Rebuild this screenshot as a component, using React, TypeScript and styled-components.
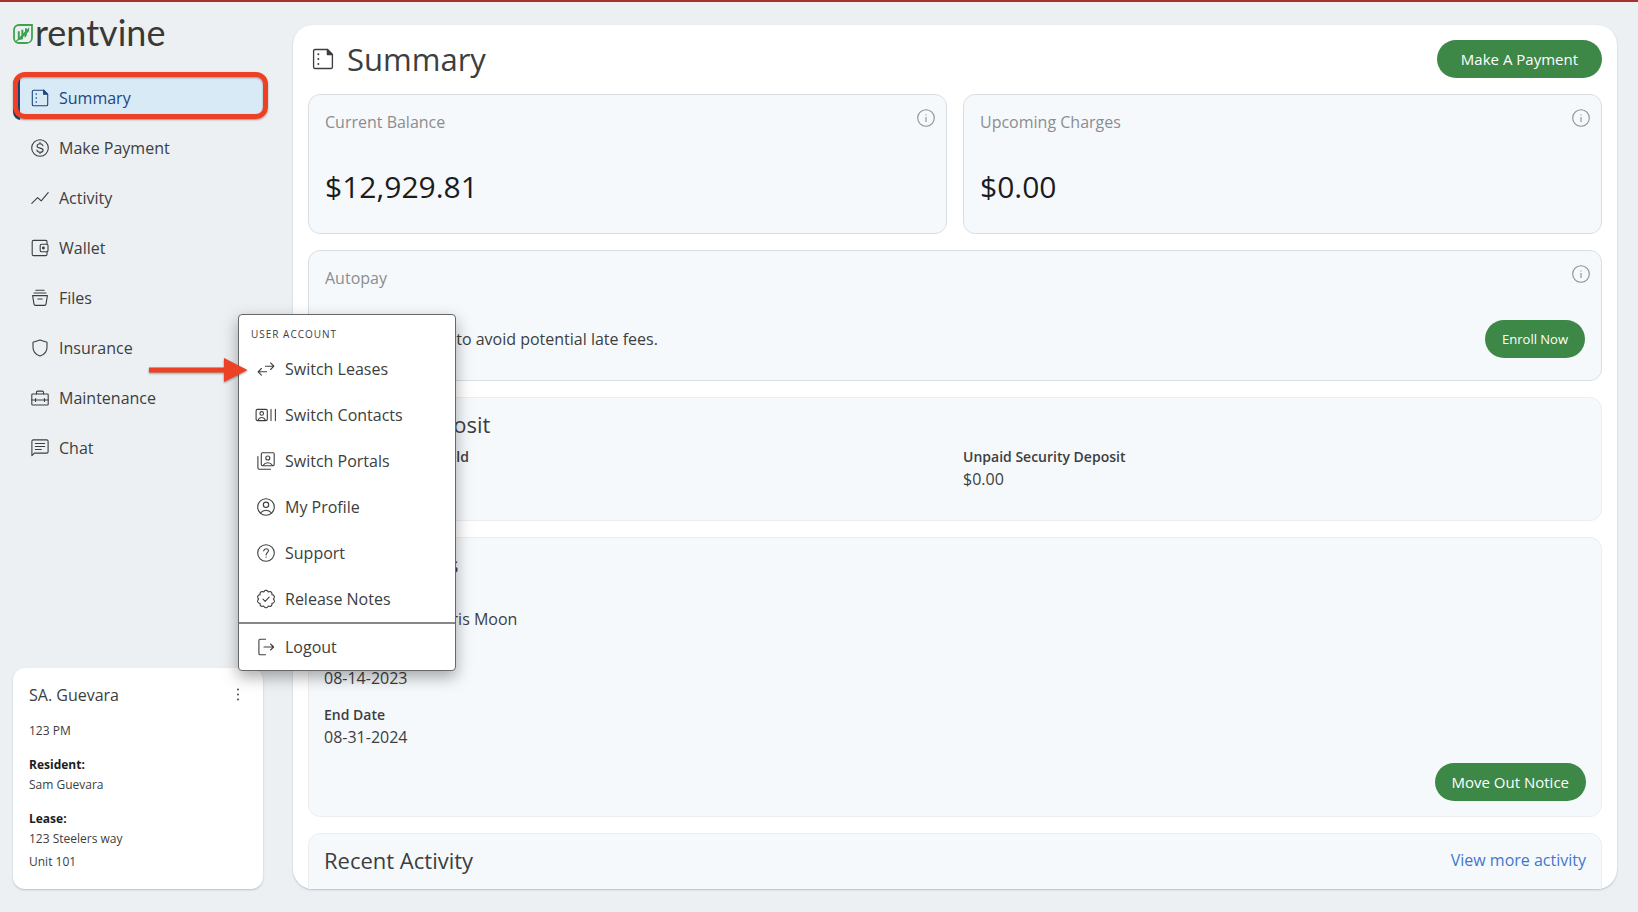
import React from "react";
import styled, { createGlobalStyle, css } from "styled-components";

const color = {
  page: "#ecf0f3",
  panel: "#ffffff",
  card: "#f6f9fc",
  text: "#3c3e40",
  strong: "#1b1c1d",
  muted: "#8b8d8f",
  green: "#3d8747",
  navy: "#1d4580",
  active: "#d8eaf6",
  link: "#3f76cf",
  mark: "#ec4125",
};

const GlobalStyle = createGlobalStyle`
  *, *::before, *::after { box-sizing: border-box; }
  body {
    margin: 0;
    background: ${color.page};
    color: ${color.text};
    font-family: "Open Sans", "Noto Sans", sans-serif;
    font-size: 16px;
    line-height: 22px;
  }
  h1, h2, p, ul, dl, dd, dt { margin: 0; padding: 0; font-weight: 400; }
  ul { list-style: none; }
  button { font: inherit; color: inherit; border: 0; background: none; padding: 0; cursor: pointer; }
  a { color: inherit; text-decoration: none; }
`;

/* ---------- Icons ---------- */

const Svg = styled.svg<{ $size?: number }>`
  display: block;
  flex: none;
  width: ${(p) => p.$size ?? 18}px;
  height: ${(p) => p.$size ?? 18}px;
  fill: none;
  stroke: currentColor;
  stroke-width: 1.1;
  stroke-linecap: round;
  stroke-linejoin: round;
`;

type IconName =
  | "summary" | "payment" | "activity" | "wallet" | "files" | "insurance"
  | "maintenance" | "chat" | "switch" | "contacts" | "portals" | "profile"
  | "support" | "release" | "logout" | "info" | "more";

const badgePath = (() => {
  const points: string[] = [];
  for (let i = 0; i < 120; i++) {
    const a = (i / 120) * Math.PI * 2;
    const r = 7.3 + 1.4 * Math.abs(Math.cos(a * 5));
    points.push(`${(9 + r * Math.sin(a)).toFixed(2)} ${(9 - r * Math.cos(a)).toFixed(2)}`);
  }
  return `M${points.join("L")}Z`;
})();

const shapes: Record<IconName, React.ReactNode> = {
  summary: (
    <>
      <path d="M12.6 1.2H2.6C1.8 1.2 1.3 1.7 1.3 2.5v13c0 .8.5 1.3 1.3 1.3h12.8c.8 0 1.3-.5 1.3-1.3V5.3z" />
      <path d="M12.6 1.2v4.1h4.1z" fill="currentColor" />
      <path d="M5.2 5v.1M5.2 9v.1M5.2 13v.1" strokeWidth="1.6" />
    </>
  ),
  payment: (
    <>
      <circle cx="9" cy="9" r="8.3" />
      <path d="M9 3.4v1.4M9 13.2v1.4M12 6.8C11.6 5.5 10.5 4.8 9 4.8c-1.7 0-2.9.8-2.9 2.1 0 3.1 6 1.3 6 4.3 0 1.3-1.3 2-3 2-1.7 0-2.900-.8-3.200-2.100" />
    </>
  ),
  activity: <path d="M.8 14.300 6.600 8.600l3.600 3.300 7-8.300" />,
  wallet: (
    <>
      <path d="M16 5V2.800c0-.9-.5-1.400-1.400-1.400H2.600c-.9 0-1.400.5-1.400 1.400v12.400c0 .9.5 1.400 1.400 1.400h12c.9 0 1.400-.5 1.400-1.400V13" />
      <rect x="9.200" y="5.300" width="7.800" height="7.400" rx="1.300" />
      <circle cx="12.400" cy="9" r=".9" fill="currentColor" />
    </>
  ),
  files: (
    <>
      <path d="M4.800 1.300h8.400M3 4h12" />
      <path d="M1.600 6.600h14.800l-1.400 8.600c-.1.700-.6 1.200-1.300 1.200H4.300c-.7 0-1.200-.5-1.300-1.200z" />
      <path d="M6.800 10h4.400" />
    </>
  ),
  insurance: <path d="M9 .9 2 3.300v5c0 4 2.800 7.400 7 8.800 4.200-1.400 7-4.800 7-8.800v-5z" />,
  maintenance: (
    <>
      <rect x=".8" y="5" width="16.400" height="11" rx=".8" />
      <path d="M5.500 5V3.200c0-.7.400-1.100 1.100-1.100h4.800c.7 0 1.100.4 1.100 1.100V5M.8 11h16.400M4.500 9.600v2.800M13.500 9.600v2.800" />
    </>
  ),
  chat: (
    <>
      <path d="M.9 16.600V2.200c0-.8.500-1.300 1.300-1.300h13.600c.8 0 1.300.5 1.300 1.300v10.600c0 .8-.5 1.300-1.300 1.300H3.400z" />
      <path d="M4.300 4.500h9.400M4.300 7.500h9.400M4.300 10.500h6" />
    </>
  ),
  switch: <path d="M8.500 6.200h8.200M13.600 2.900l3.300 3.300-3.300 3.300M9.500 11.800H1.300M4.400 8.500l-3.300 3.300 3.300 3.300" />,
  contacts: (
    <>
      <rect x="-.9" y="3.400" width="11.200" height="11.200" rx="1.300" />
      <circle cx="4.700" cy="7.400" r="1.800" />
      <path d="M1 14.200c.8-1.800 2-2.700 3.700-2.700s2.900.9 3.700 2.700M14 3.400v11.200M18.400 3.400v11.200" />
    </>
  ),
  portals: (
    <>
      <rect x="4.300" y=".8" width="12.900" height="12.900" rx="1.200" />
      <circle cx="10.800" cy="6" r="2" />
      <path d="M6 13.500c1.200-1.800 2.800-2.700 4.800-2.700s3.600.9 4.800 2.700M.9 4.600V16c0 .8.400 1.200 1.200 1.200h11.400" />
    </>
  ),
  profile: (
    <>
      <circle cx="9" cy="9" r="8.300" />
      <circle cx="9" cy="6.800" r="2.700" />
      <path d="M3.400 15c1.500-1.800 3.300-2.700 5.600-2.700s4.100.9 5.600 2.700" />
    </>
  ),
  support: (
    <>
      <circle cx="9" cy="9" r="8.300" />
      <path d="M6.700 6.900c.2-1.400 1-2.100 2.400-2.100s2.300.8 2.300 2c0 1.700-2.300 2-2.300 4.100M9.100 13v.2" />
    </>
  ),
  release: (
    <>
      <path d={badgePath} />
      <path d="m6 9.200 2.100 2.100 4.100-4.200" />
    </>
  ),
  logout: (
    <path d="M8.500 1.300H3.200c-.8 0-1.300.5-1.300 1.300v12.800c0 .8.500 1.300 1.300 1.300h5.300M7 9h9.600M13.600 6l3 3-3 3" />
  ),
  info: (
    <>
      <circle cx="9" cy="9" r="8.300" />
      <path d="M9 8v5M9 5.400v1.200" strokeLinecap="butt" />
    </>
  ),
  more: <path d="M9 3.500v.1M9 8.500v.1M9 13.500v.1" strokeWidth="1.900" />,
};

const Icon = ({ name, size }: { name: IconName; size?: number }) => (
  <Svg $size={size} viewBox="0 0 18 18" overflow="visible" aria-hidden="true">
    {shapes[name]}
  </Svg>
);

/* ---------- Shell ---------- */

const Shell = styled.div`
  display: grid;
  grid-template-columns: 250px minmax(0, 1fr);
  column-gap: 30px;
  height: 100vh;
  padding: 23px 21px 23px 13px;
  border-top: 2px solid #a5302c;
`;

const Sidebar = styled.aside`
  display: flex;
  flex-direction: column;
  min-height: 0;
`;

const Brand = styled.a`
  display: flex;
  align-items: center;
  gap: 2px;
  height: 18px;
  margin-bottom: 33px;
  color: #3a3936;
  font-family: Lato, "Open Sans", sans-serif;
  font-size: 36px;
  line-height: 18px;
`;

const LeafMark = styled.svg`
  flex: none;
  width: 20px;
  height: 20px;
`;

const BrandName = styled.span`
  padding-bottom: 4px;
`;

const NavList = styled.ul`
  display: flex;
  flex-direction: column;
  gap: 6px;
`;

const NavLink = styled.a<{ $active?: boolean }>`
  position: relative;
  display: flex;
  align-items: center;
  gap: 10px;
  height: 44px;
  padding-left: 18px;
  border-radius: 8px;
  ${(p) =>
    p.$active &&
    css`
      color: ${color.navy};
      background: linear-gradient(to right, ${color.navy} 7px, ${color.active} 7px);
    `}
`;

const Highlight = styled.span`
  position: absolute;
  inset: -4px -5px 1px 0;
  border: 5px solid ${color.mark};
  border-radius: 12px;
  box-shadow: 0 1px 2px rgba(0, 0, 0, 0.35), inset 0 1px 2px rgba(0, 0, 0, 0.35);
`;

/* ---------- Account card and menu ---------- */

const Account = styled.div`
  position: relative;
  z-index: 2;
  margin-top: auto;
`;

const AccountCard = styled.section`
  padding: 15px 16px 17px;
  border-radius: 12px;
  background: ${color.panel};
  box-shadow: 0 1px 2px rgba(70, 110, 150, 0.35);
  font-size: 12px;
  line-height: 20px;
`;

const AccountHead = styled.div`
  display: flex;
  justify-content: space-between;
  align-items: center;
  margin-bottom: 14px;
`;

const AccountName = styled.h2`
  font-size: 16px;
  line-height: 24px;
`;

const AccountFact = styled.div`
  margin-top: 14px;
  dt { color: ${color.strong}; font-weight: 700; }
  dd + dd { margin-top: 3px; }
`;

const Menu = styled.div`
  position: absolute;
  left: 225px;
  bottom: calc(100% - 3px);
  width: 218px;
  border: 1px solid #66686a;
  border-radius: 4px;
  background: ${color.panel};
  box-shadow: 0 6px 16px rgba(0, 0, 0, 0.34);
`;

const MenuTitle = styled.p`
  padding: 7px 12px 0;
  font-size: 10px;
  line-height: 24px;
  letter-spacing: 1px;
  text-transform: uppercase;
`;

const MenuItem = styled.button<{ $divided?: boolean }>`
  display: flex;
  align-items: center;
  gap: 10px;
  width: 100%;
  height: 46px;
  padding-left: 18px;
  text-align: left;
  ${(p) => p.$divided && css`border-top: 2px solid #858789; height: 48px;`}
`;

const Pointer = styled.svg`
  position: absolute;
  left: -91px;
  top: 41px;
  width: 100px;
  height: 28px;
  fill: ${color.mark};
  filter: drop-shadow(0 1px 1px rgba(0, 0, 0, 0.4));
`;

/* ---------- Main panel ---------- */

const Panel = styled.main`
  display: flex;
  flex-direction: column;
  gap: 16px;
  min-height: 0;
  padding: 15px 15px 0;
  overflow: hidden;
  border-radius: 20px;
  background: ${color.panel};
  box-shadow: 0 1px 2px rgba(70, 110, 150, 0.35);
  > * { flex: none; }
`;

const PanelHead = styled.header`
  display: flex;
  align-items: center;
  justify-content: space-between;
  height: 38px;
  padding-left: 4px;
`;

const PageTitle = styled.h1`
  display: flex;
  align-items: center;
  gap: 13px;
  font-size: 31px;
  line-height: 38px;
`;

const PillButton = styled.button<{ $wide?: boolean; $small?: boolean }>`
  height: 38px;
  padding: 0 ${(p) => (p.$wide ? 24 : 17)}px;
  border-radius: 20px;
  background: ${color.green};
  color: #ffffff;
  font-size: ${(p) => (p.$small ? 13 : 15)}px;
`;

const TwoColumns = styled.div`
  display: grid;
  grid-template-columns: 1fr 1fr;
  gap: 16px;
`;

const Card = styled.section<{ $outlined?: boolean }>`
  padding: 12px 15px 14px;
  border: 1px solid ${(p) => (p.$outlined ? "#d9dee2" : "#ebedef")};
  border-radius: 12px;
  background: ${color.card};
`;

const BalanceCard = styled(Card)`
  padding: 14px 11px 26px 16px;
`;

const AutopayCard = styled(Card)`
  padding: 14px 11px 22px 16px;
`;

const DepositCard = styled(Card)`
  padding-bottom: 30px;
`;

const ActivityCard = styled(Card)`
  padding-bottom: 40px;
`;

const CardHead = styled.div`
  display: flex;
  justify-content: space-between;
  align-items: flex-start;
  color: ${color.muted};
`;

const CardLabel = styled.h2`
  font-size: 16px;
  line-height: 26px;
`;

const Amount = styled.p`
  margin-top: 32px;
  color: ${color.strong};
  font-size: 30px;
  line-height: 40px;
`;

const AutopayRow = styled.div`
  display: flex;
  align-items: center;
  justify-content: space-between;
  margin-top: 29px;
  padding-right: 5px;
`;

const SectionHead = styled.div`
  display: flex;
  justify-content: space-between;
  align-items: center;
`;

const SectionTitle = styled.h2`
  font-size: 22px;
  line-height: 28px;
`;

const Facts = styled.dl<{ $columns?: boolean }>`
  display: grid;
  grid-template-columns: ${(p) => (p.$columns ? "1fr 1fr" : "1fr")};
  gap: 15px 16px;
  margin-top: 8px;
  dt { font-size: 14px; font-weight: 600; }
`;

const Actions = styled.div`
  display: flex;
  justify-content: flex-end;
  margin-top: 15px;
  padding-bottom: 1px;
`;

const TextLink = styled.a`
  color: ${color.link};
`;

/* ---------- Content ---------- */

const navItems: { icon: IconName; label: string }[] = [
  { icon: "summary", label: "Summary" },
  { icon: "payment", label: "Make Payment" },
  { icon: "activity", label: "Activity" },
  { icon: "wallet", label: "Wallet" },
  { icon: "files", label: "Files" },
  { icon: "insurance", label: "Insurance" },
  { icon: "maintenance", label: "Maintenance" },
  { icon: "chat", label: "Chat" },
];

const menuItems: { icon: IconName; label: string }[] = [
  { icon: "switch", label: "Switch Leases" },
  { icon: "contacts", label: "Switch Contacts" },
  { icon: "portals", label: "Switch Portals" },
  { icon: "profile", label: "My Profile" },
  { icon: "support", label: "Support" },
  { icon: "release", label: "Release Notes" },
  { icon: "logout", label: "Logout" },
];

const Fact = ({ label, value }: { label: string; value: string }) => (
  <div>
    <dt>{label}</dt>
    <dd>{value}</dd>
  </div>
);

const InfoButton = ({ label }: { label: string }) => (
  <button type="button" aria-label={label}>
    <Icon name="info" />
  </button>
);

const Balance = ({ label, amount }: { label: string; amount: string }) => (
  <BalanceCard $outlined>
    <CardHead>
      <CardLabel>{label}</CardLabel>
      <InfoButton label={`About ${label}`} />
    </CardHead>
    <Amount>{amount}</Amount>
  </BalanceCard>
);

export default function App() {
  return (
    <>
      <GlobalStyle />
      <Shell>
        <Sidebar>
          <Brand href="#">
            <LeafMark viewBox="1 1 18 18" aria-hidden="true">
              <path
                d="M6.500 1.900h11.600v11.200c0 2.900-2.100 5-5 5H6.500c-2.700 0-4.600-1.900-4.600-4.600V6.500c0-2.700 1.900-4.600 4.600-4.600z"
                fill="none"
                stroke="#3fa24f"
                strokeWidth="1.600"
              />
              <path
                d="M5.300 7.500h1.800v5.200l1.400-1.500V6.200h1.800v3.200l1.500-1.600V4.800h1.700v1.400l2-2.200c.2 1.300.1 2.600-.3 3.900l-1.700 1.400v1.600c-.5 1.100-1.200 2-2 2.700v-2.200l-1.500 1.300v1.900c-.6.300-1.300.5-2 .6l-1.900.1-1.700 1.800-.9-.8 1.800-1.900z"
                fill="#3fa24f"
              />
            </LeafMark>
            <BrandName>rentvine</BrandName>
          </Brand>
          <nav>
            <NavList>
              {navItems.map(({ icon, label }, i) => (
                <li key={label}>
                  <NavLink href="#" $active={i === 0}>
                    <Icon name={icon} />
                    {label}
                    {i === 0 && <Highlight />}
                  </NavLink>
                </li>
              ))}
            </NavList>
          </nav>
          <Account>
            <AccountCard>
              <AccountHead>
                <AccountName>SA. Guevara</AccountName>
                <button type="button" aria-label="Account menu">
                  <Icon name="more" />
                </button>
              </AccountHead>
              <p>123 PM</p>
              <dl>
                <AccountFact>
                  <dt>Resident:</dt>
                  <dd>Sam Guevara</dd>
                </AccountFact>
                <AccountFact>
                  <dt>Lease:</dt>
                  <dd>123 Steelers way</dd>
                  <dd>Unit 101</dd>
                </AccountFact>
              </dl>
            </AccountCard>
            <Menu>
              <MenuTitle>User Account</MenuTitle>
              {menuItems.map(({ icon, label }) => (
                <MenuItem key={label} type="button" $divided={icon === "logout"}>
                  <Icon name={icon} />
                  {label}
                </MenuItem>
              ))}
              <Pointer viewBox="0 0 100 28" aria-hidden="true">
                <path d="M1 11.500h75V2l23.500 12L76 26v-9.500H1z" />
              </Pointer>
            </Menu>
          </Account>
        </Sidebar>

        <Panel>
          <PanelHead>
            <PageTitle>
              <Icon name="summary" size={22} />
              Summary
            </PageTitle>
            <PillButton type="button" $wide>Make A Payment</PillButton>
          </PanelHead>
          <TwoColumns>
            <Balance label="Current Balance" amount="$12,929.81" />
            <Balance label="Upcoming Charges" amount="$0.00" />
          </TwoColumns>
          <AutopayCard $outlined>
            <CardHead>
              <CardLabel>Autopay</CardLabel>
              <InfoButton label="About Autopay" />
            </CardHead>
            <AutopayRow>
              <p>Enroll in Autopay to avoid potential late fees.</p>
              <PillButton type="button" $small>Enroll Now</PillButton>
            </AutopayRow>
          </AutopayCard>
          <DepositCard>
            <SectionTitle>Security Deposit</SectionTitle>
            <Facts $columns>
              <Fact label="Security Deposit Held" value="$0.00" />
              <Fact label="Unpaid Security Deposit" value="$0.00" />
            </Facts>
          </DepositCard>
          <Card>
            <SectionTitle>Lease Details</SectionTitle>
            <Facts>
              <Fact label="Tenants" value="Sam Guevara, Chris Moon" />
              <Fact label="Start Date" value="08-14-2023" />
              <Fact label="End Date" value="08-31-2024" />
            </Facts>
            <Actions>
              <PillButton type="button">Move Out Notice</PillButton>
            </Actions>
          </Card>
          <ActivityCard>
            <SectionHead>
              <SectionTitle>Recent Activity</SectionTitle>
              <TextLink href="#">View more activity</TextLink>
            </SectionHead>
          </ActivityCard>
        </Panel>
      </Shell>
    </>
  );
}
